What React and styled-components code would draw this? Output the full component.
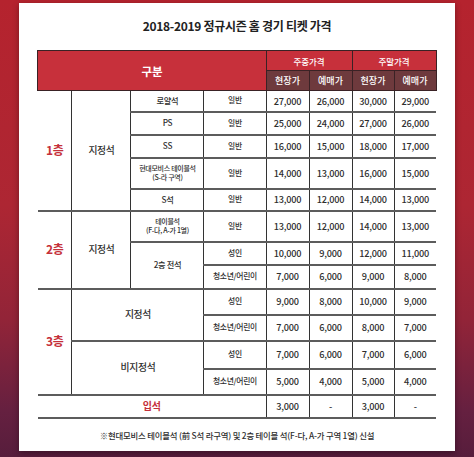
import React from "react";
import styled, { createGlobalStyle } from "styled-components";

const GlobalStyle = createGlobalStyle`
  html, body {
    margin: 0;
    padding: 0;
  }
  body {
    width: 474px;
    height: 457px;
    overflow: hidden;
    font-family: "Noto Sans CJK KR", "Noto Sans", sans-serif;
    background: linear-gradient(180deg, #b5232e 0%, #ad2633 45%, #922438 70%, #652040 90%, #571d3c 100%);
  }
`;

const Card = styled.div`
  margin: 3px 19px 0;
  width: 436px;
  height: 448px;
  background: #ffffff;
  box-shadow: 0 2px 6px rgba(0, 0, 0, 0.35);
  display: flex;
  flex-direction: column;
  align-items: center;
  box-sizing: border-box;
  padding-top: 15px;
`;

const Title = styled.h1`
  margin: 0 0 16px;
  font-size: 12px;
  line-height: 16px;
  font-weight: 700;
  letter-spacing: -0.3px;
  color: #222222;
`;

const PriceTable = styled.table`
  width: 398px;
  table-layout: fixed;
  border-collapse: collapse;
  color: #333333;
`;

const HeadCell = styled.th`
  padding: 0;
  height: ${p => p.$h}px;
  background: ${p => (p.$dark ? "#6e3a3d" : "#c7303b")};
  border: 1px solid #3a2225;
  color: #ffffff;
  font-size: ${p => (p.$big ? 11.5 : p.$dark ? 9 : 8.5)}px;
  font-weight: ${p => (p.$big ? 700 : 500)};
  text-align: center;
  vertical-align: middle;
`;

const Row = styled.tr`
  height: ${p => p.$h}px;
`;

const sizes = {
  floor: { size: 12, weight: 700, color: "#c5303a" },
  zone: { size: 9.8, weight: 500, color: "#2e2e2e" },
  standing: { size: 10, weight: 700, color: "#c5303a" },
  seat: { size: 8.2, weight: 500, color: "#2e2e2e" },
  small: { size: 7, weight: 500, color: "#2e2e2e" },
  type: { size: 7.8, weight: 500, color: "#2e2e2e" },
  price: { size: 9.2, weight: 500, color: "#2e2e2e" },
};

const Cell = styled.td`
  padding: 0;
  text-align: center;
  vertical-align: middle;
  border-bottom: 2px solid #5c5c5c;
  border-left: ${p => (p.$edge ? "none" : "1px solid #333333")};
  font-size: ${p => sizes[p.$kind || "price"].size}px;
  font-weight: ${p => sizes[p.$kind || "price"].weight};
  color: ${p => sizes[p.$kind || "price"].color};
  line-height: 1.35;
  letter-spacing: ${p => (p.$kind === "price" || !p.$kind ? "-0.2px" : "-0.3px")};
  white-space: nowrap;
`;

const Note = styled.p`
  margin: 0;
  flex: 1;
  display: flex;
  align-items: center;
  font-size: 8.4px;
  font-weight: 500;
  color: #2e2e2e;
  letter-spacing: -0.2px;
`;

const Prices = ({ values }) =>
  values.map((v, i) => <Cell key={i}>{v}</Cell>);

export default function App() {
  return (
    <>
      <GlobalStyle />
      <Card>
        <Title>2018-2019 정규시즌 홈 경기 티켓 가격</Title>
        <PriceTable>
          <colgroup>
            <col style={{ width: 34 }} />
            <col style={{ width: 59 }} />
            <col style={{ width: 73 }} />
            <col style={{ width: 62 }} />
            <col style={{ width: 43 }} />
            <col style={{ width: 43 }} />
            <col style={{ width: 42 }} />
            <col style={{ width: 42 }} />
          </colgroup>
          <thead>
            <tr>
              <HeadCell $h={19} $big colSpan={4} rowSpan={2}>구분</HeadCell>
              <HeadCell $h={19} colSpan={2}>주중가격</HeadCell>
              <HeadCell $h={19} colSpan={2}>주말가격</HeadCell>
            </tr>
            <tr>
              <HeadCell $h={19} $dark>현장가</HeadCell>
              <HeadCell $h={19} $dark>예매가</HeadCell>
              <HeadCell $h={19} $dark>현장가</HeadCell>
              <HeadCell $h={19} $dark>예매가</HeadCell>
            </tr>
          </thead>
          <tbody>
            <Row $h={21}>
              <Cell $edge $kind="floor" rowSpan={5}>1층</Cell>
              <Cell $kind="zone" rowSpan={5}>지정석</Cell>
              <Cell $kind="seat">로얄석</Cell>
              <Cell $kind="type">일반</Cell>
              <Prices values={["27,000", "26,000", "30,000", "29,000"]} />
            </Row>
            <Row $h={23}>
              <Cell $kind="seat">PS</Cell>
              <Cell $kind="type">일반</Cell>
              <Prices values={["25,000", "24,000", "27,000", "26,000"]} />
            </Row>
            <Row $h={23}>
              <Cell $kind="seat">SS</Cell>
              <Cell $kind="type">일반</Cell>
              <Prices values={["16,000", "15,000", "18,000", "17,000"]} />
            </Row>
            <Row $h={31}>
              <Cell $kind="small">
                현대모비스 테이블석
                <br />
                (S-라 구역)
              </Cell>
              <Cell $kind="type">일반</Cell>
              <Prices values={["14,000", "13,000", "16,000", "15,000"]} />
            </Row>
            <Row $h={22}>
              <Cell $kind="seat">S석</Cell>
              <Cell $kind="type">일반</Cell>
              <Prices values={["13,000", "12,000", "14,000", "13,000"]} />
            </Row>

            <Row $h={31}>
              <Cell $edge $kind="floor" rowSpan={3}>2층</Cell>
              <Cell $kind="zone" rowSpan={3}>지정석</Cell>
              <Cell $kind="small">
                테이블석
                <br />
                (F-다, A-가 1열)
              </Cell>
              <Cell $kind="type">일반</Cell>
              <Prices values={["13,000", "12,000", "14,000", "13,000"]} />
            </Row>
            <Row $h={23}>
              <Cell $kind="seat" rowSpan={2}>2층 전석</Cell>
              <Cell $kind="type">성인</Cell>
              <Prices values={["10,000", "9,000", "12,000", "11,000"]} />
            </Row>
            <Row $h={24}>
              <Cell $kind="type">청소년/어린이</Cell>
              <Prices values={["7,000", "6,000", "9,000", "8,000"]} />
            </Row>

            <Row $h={26}>
              <Cell $edge $kind="floor" rowSpan={4}>3층</Cell>
              <Cell $kind="zone" colSpan={2} rowSpan={2}>지정석</Cell>
              <Cell $kind="type">성인</Cell>
              <Prices values={["9,000", "8,000", "10,000", "9,000"]} />
            </Row>
            <Row $h={26}>
              <Cell $kind="type">청소년/어린이</Cell>
              <Prices values={["7,000", "6,000", "8,000", "7,000"]} />
            </Row>
            <Row $h={28}>
              <Cell $kind="zone" colSpan={2} rowSpan={2}>비지정석</Cell>
              <Cell $kind="type">성인</Cell>
              <Prices values={["7,000", "6,000", "7,000", "6,000"]} />
            </Row>
            <Row $h={26}>
              <Cell $kind="type">청소년/어린이</Cell>
              <Prices values={["5,000", "4,000", "5,000", "4,000"]} />
            </Row>

            <Row $h={23}>
              <Cell $edge $kind="standing" colSpan={4}>입석</Cell>
              <Prices values={["3,000", "-", "3,000", "-"]} />
            </Row>
          </tbody>
        </PriceTable>
        <Note>※현대모비스 테이블석 (前 S석 라구역) 및 2층 테이블 석(F-다, A-가 구역 1열) 신설</Note>
      </Card>
    </>
  );
}
